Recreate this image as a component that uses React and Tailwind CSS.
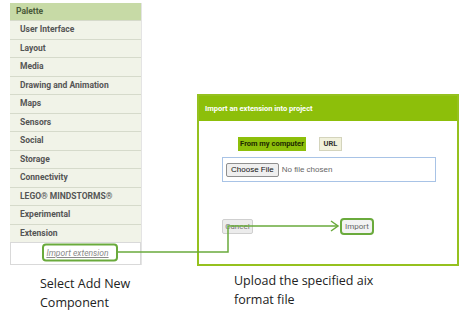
import React from 'react'

const categories = [
  'User Interface',
  'Layout',
  'Media',
  'Drawing and Animation',
  'Maps',
  'Sensors',
  'Social',
  'Storage',
  'Connectivity',
  'LEGO® MINDSTORMS®',
  'Experimental',
  'Extension',
]

const Palette = () => (
  <div className="w-[132px] border-r border-[#e4e4e4] font-['Roboto',sans-serif] text-[8.5px] font-bold text-[#555]">
    <div className="h-[17px] bg-[#c7daa6] pl-[6px] flex items-center text-[#4a5a3a]">Palette</div>
    {categories.map((name) => (
      <div
        key={name}
        className="h-[18.5px] bg-[#f1f3e8] border-t border-[#d6dacb] pl-[10px] flex items-center"
      >
        {name}
      </div>
    ))}
    <div className="h-[23px] bg-white border border-[#d9d9d9] flex items-center justify-center">
      <span className="font-normal italic underline text-[#8a8a8a] pl-[4px]">Import extension</span>
    </div>
  </div>
)

const ImportDialog = () => (
  <div className="w-[262px] h-[172px] border-[2px] border-[#95c11f] bg-white font-['Roboto',sans-serif]">
    <div className="h-[25px] bg-[#8dbf0a] pl-[6px] flex items-center text-[7.5px] font-bold text-white">
      Import an extension into project
    </div>
    <div className="pl-[23px] pt-[16px]">
      <div className="flex items-center gap-[13px] pl-[16px]">
        <div className="h-[14px] w-[68px] bg-[#8dbf0a] flex items-center justify-center text-[7.5px] font-bold text-[#1d2a00]">
          From my computer
        </div>
        <div className="h-[14px] w-[23px] bg-[#f1f1dc] border border-[#d4d4bc] flex items-center justify-center text-[7.5px] font-bold text-[#333]">
          URL
        </div>
      </div>
      <div className="mt-[6px] w-[214px] h-[25px] border border-[#a8c3e6] flex items-center pl-[3px] gap-[3px] font-['Liberation_Sans',sans-serif] text-[8px]">
        <span className="h-[14px] px-[4px] bg-[#efefef] border border-[#8f8f8f] rounded-[2px] flex items-center text-[#111]">
          Choose File
        </span>
        <span className="text-[#666]">No file chosen</span>
      </div>
      <div className="mt-[36px] flex items-center">
        <div className="h-[15px] w-[31px] bg-[#ececec] border border-[#cfcfcf] rounded-[2px] flex items-center justify-center text-[8px] text-[#777]">
          Cancel
        </div>
        <div className="ml-[87px] h-[17px] w-[34px] bg-[#f3f3f3] border-[2px] border-[#6aaa3c] rounded-[4px] flex items-center justify-center text-[8px] text-[#666]">
          Import
        </div>
      </div>
    </div>
  </div>
)

export default function App() {
  return (
    <div className="relative w-[474px] h-[310px] bg-white overflow-hidden">
      <div className="flex">
        <div className="pl-[10px] pt-[3px]">
          <Palette />
          <div className="mt-[9px] pl-[30px] font-['Open_Sans',sans-serif] text-[12.5px] leading-[19px] text-[#222]">
            <div>Select Add New</div>
            <div>Component</div>
          </div>
        </div>
        <div className="pl-[55px] pt-[94px]">
          <ImportDialog />
          <div className="mt-[5px] pl-[37px] font-['Open_Sans',sans-serif] text-[12.5px] leading-[19px] text-[#222]">
            <div>Upload the specified aix</div>
            <div>format file</div>
          </div>
        </div>
      </div>

      {/* annotation connectors */}
      <svg className="absolute inset-0 pointer-events-none" width="474" height="310" viewBox="0 0 474 310">
        <rect x="43" y="244.5" width="74" height="16" rx="3" fill="none" stroke="#6aaa3c" strokeWidth="2" />
        <polyline
          points="117,252 228,252 228,226 337,226"
          fill="none"
          stroke="#6aaa3c"
          strokeWidth="1.5"
        />
        <polyline points="331,221 338,226 331,231" fill="none" stroke="#6aaa3c" strokeWidth="1.5" />
      </svg>
    </div>
  )
}
